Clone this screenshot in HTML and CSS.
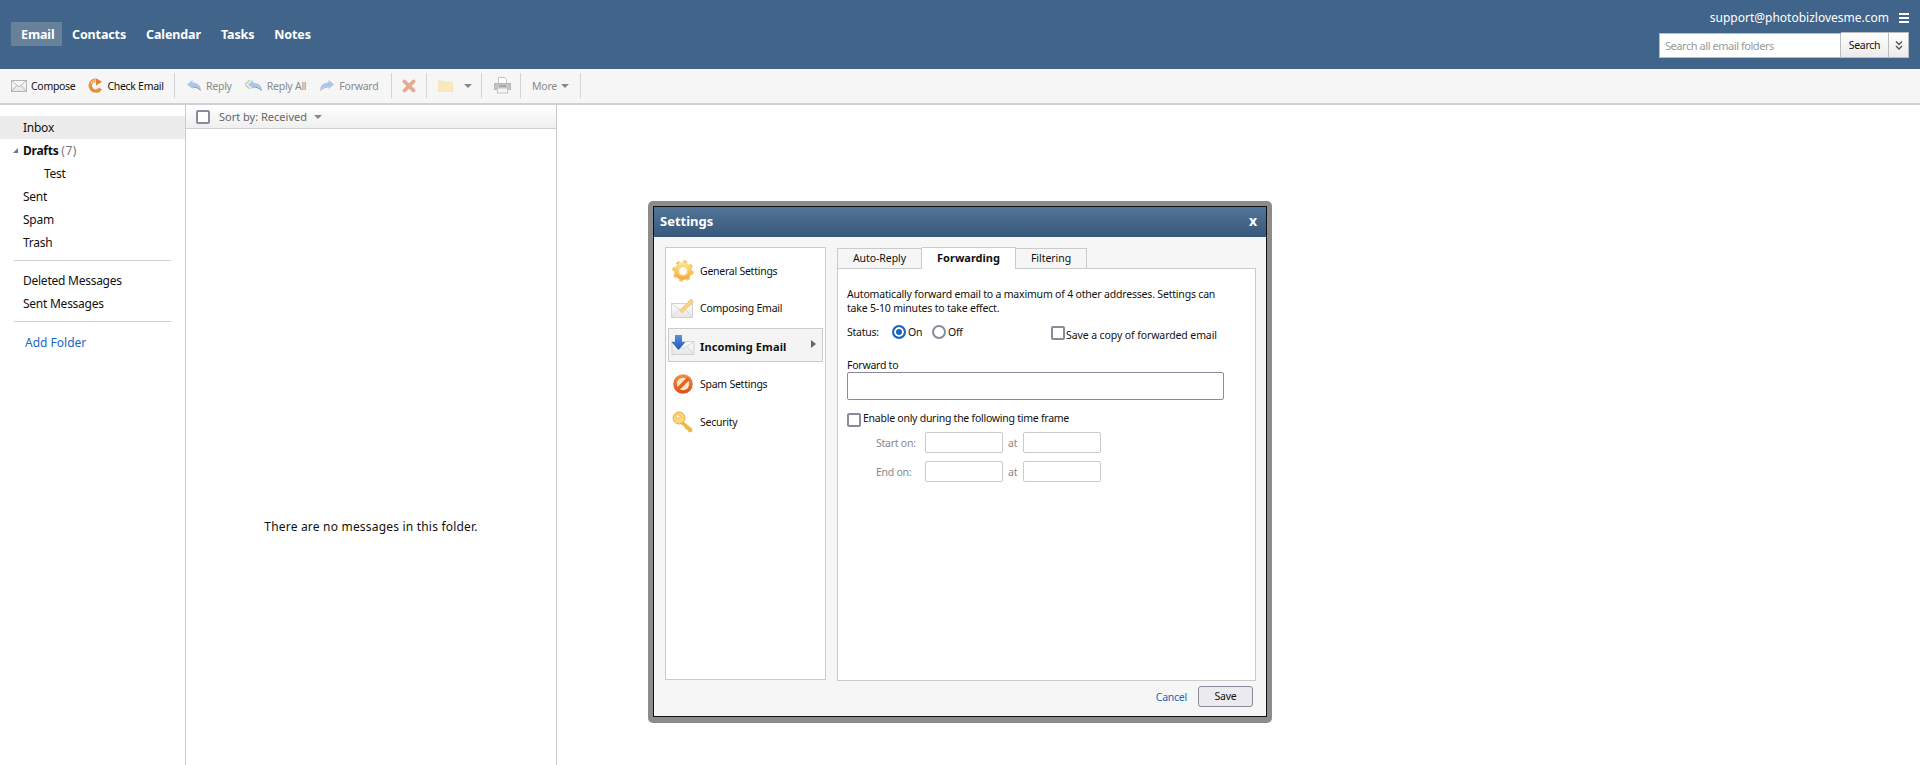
FILE: index.html
```html
<!DOCTYPE html>
<html lang="en">
<head>
<meta charset="utf-8">
<title>Email</title>
<link rel="stylesheet" href="styles.css">
</head>
<body>
<svg class="defs" width="0" height="0" aria-hidden="true">
  <defs>
    <linearGradient id="env" x1="0" y1="0" x2="0" y2="1"><stop offset="0" stop-color="#fdfdfd"/><stop offset="1" stop-color="#e6e6e6"/></linearGradient>
    <linearGradient id="gear" x1="0" y1="0" x2="0" y2="1"><stop offset="0" stop-color="#fde08a"/><stop offset="1" stop-color="#f3ae3e"/></linearGradient>
    <linearGradient id="orange" x1="0" y1="0" x2="0" y2="1"><stop offset="0" stop-color="#f58a3c"/><stop offset="1" stop-color="#d9561a"/></linearGradient>
    <linearGradient id="blue" x1="0" y1="0" x2="0" y2="1"><stop offset="0" stop-color="#5a92e0"/><stop offset="1" stop-color="#1f56b4"/></linearGradient>
  </defs>
</svg>
<header class="topbar">
  <nav class="mainnav">
    <a class="tab tab-on">Email</a>
    <a class="tab">Contacts</a>
    <a class="tab">Calendar</a>
    <a class="tab">Tasks</a>
    <a class="tab">Notes</a>
  </nav>
  <div class="account">
    <div class="userline">
      <span class="user">support@photobizlovesme.com</span>
      <span class="burger"><i></i><i></i><i></i></span>
    </div>
    <div class="search">
      <span class="searchbox">Search all email folders</span>
      <span class="searchbtn">Search</span>
      <span class="searchmore"><svg width="8" height="11" viewBox="0 0 8 11"><path d="M1 1.500l3 3 3-3M1 6l3 3 3-3" fill="none" stroke="#555" stroke-width="1.400"/></svg></span>
    </div>
  </div>
</header>

<div class="toolbar">
  <div class="tgroup g-compose">
    <span class="tool t-compose"><svg width="16" height="12" viewBox="0 0 16 12"><rect x=".5" y=".5" width="15" height="11" fill="url(#env)" stroke="#b5b5b5"/><path d="M.5.5L8 7l7.500-6.500M.5 11.500L6 5.500M15.500 11.500L10 5.500" fill="none" stroke="#b5b5b5"/></svg>Compose</span>
    <span class="tool t-check"><svg width="15" height="15" viewBox="0 0 15 15"><path d="M12.500 10.500A5.500 5.500 0 1 1 7 2.200" fill="none" stroke="#e9903e" stroke-width="3.400"/><path d="M7.500 0L14 3.800 8 7.500z" fill="#e97f2c"/><path d="M3 5.500A5 5 0 0 1 6.500 2.500" fill="none" stroke="#fbdcae" stroke-width="1.200"/></svg>Check Email</span>
  </div>
  <div class="tgroup g-reply dim">
    <span class="tool t-reply"><svg width="16" height="13" viewBox="0 0 16 13"><path d="M6.500 1L1 5.500l5.500 4.500V7.500c3.500 0 6 .5 8.500 4 0-4.500-3-7.500-8.500-8z" fill="#a9c6ec"/><path d="M6.500 8c3.500 0 6 1 8 3.500" fill="none" stroke="#8a8a8a" stroke-width="1"/></svg>Reply</span>
    <span class="tool t-replyall"><svg width="18" height="13" viewBox="0 0 18 13"><path d="M5 1L0 5.500 5 10" fill="none" stroke="#c9cb9a" stroke-width="1.500"/><path d="M8 1L3 5.500 8 10V7.500c3.500 0 6 .5 9 4 0-4.500-3.500-7.500-9-8z" fill="#a9c6ec"/><path d="M8 8c3.500 0 6 1 8.500 3.500" fill="none" stroke="#8a8a8a" stroke-width="1"/></svg>Reply All</span>
    <span class="tool t-forward"><svg width="16" height="13" viewBox="0 0 16 13"><path d="M9.500 1L15 5.500 9.500 10V7.500C6 7.500 3.500 8 1 11.500c0-4.500 3-7.500 8.500-8z" fill="#a9c6ec"/><path d="M9.500 8C6.500 8 4 9 1.500 11.500" fill="none" stroke="#9a9a9a" stroke-width=".8"/></svg>Forward</span>
  </div>
  <div class="tgroup g-del dim"><svg width="14" height="14" viewBox="0 0 14 14"><path d="M2.500 2.500l9 9M11.500 2.500l-9 9" stroke="#e9a88e" stroke-width="3.800" stroke-linecap="round"/></svg></div>
  <div class="tgroup g-move dim"><svg width="15" height="12" viewBox="0 0 15 12"><path d="M0 1h5l1 1h9v10H0z" fill="#fbe8bf" stroke="#f2dcac" stroke-width=".5"/></svg><span class="caret"></span></div>
  <div class="tgroup g-print dim"><svg width="17" height="17" viewBox="0 0 17 17"><path d="M4.500.5h6l2 2v5h-8z" fill="#fff" stroke="#c4c4c4"/><rect x=".5" y="6.500" width="16" height="6" fill="#c4c4c4" stroke="#b8b8b8"/><rect x="3.500" y="11" width="10" height="5" fill="#f5f5f5" stroke="#c4c4c4"/><path d="M5 9h7" stroke="#8d8d8d"/></svg></div>
  <div class="tgroup g-more dim"><span class="tool">More</span><span class="caret"></span></div>
</div>

<main class="panes">
  <aside class="folders">
    <div class="folder folder-on">Inbox</div>
    <div class="folder folder-bold"><span class="twist"></span><b>Drafts</b> <span class="count">(7)</span></div>
    <div class="folder folder-sub">Test</div>
    <div class="folder">Sent</div>
    <div class="folder">Spam</div>
    <div class="folder">Trash</div>
    <hr class="rule">
    <div class="folder">Deleted Messages</div>
    <div class="folder">Sent Messages</div>
    <hr class="rule rule-second">
    <div class="folder folder-add"><a class="link">Add Folder</a></div>
  </aside>
  <section class="list">
    <div class="sortbar"><span class="check check-sort"></span><span class="sortlabel">Sort by: Received</span><span class="caret"></span></div>
    <div class="empty">There are no messages in this folder.</div>
  </section>
  <section class="reading"></section>
</main>

<div class="modal">
  <div class="modal-inner">
    <div class="modal-title"><span>Settings</span><span class="close">x</span></div>
    <div class="modal-body">
      <ul class="menu">
        <li class="item">
          <svg class="ico" width="24" height="24" viewBox="0 0 24 24"><circle cx="12" cy="12" r="9.200" fill="none" stroke="#f6c25e" stroke-width="3" stroke-dasharray="3.600 3.620"/><circle cx="12" cy="12" r="7" fill="none" stroke="url(#gear)" stroke-width="4"/><circle cx="12" cy="12" r="4.500" fill="#fffbe8" stroke="#eeb24a" stroke-width=".7"/></svg>
          <span>General Settings</span>
        </li>
        <li class="item item-short">
          <svg class="ico" width="24" height="20" viewBox="0 0 24 20"><rect x=".5" y="5.500" width="21" height="14" fill="url(#env)" stroke="#d2d2d2"/><path d="M.5 5.500L11 13l10.500-7.500M.5 19.500L8 11M21.500 19.500L14 11" fill="none" stroke="#d8d8d8"/><path d="M8.500 12.500L20 1l2.500 2.500L11 15z" fill="#f8d284" stroke="#ecb85a" stroke-width=".5"/></svg>
          <span>Composing Email</span>
        </li>
        <li class="item item-on">
          <svg class="ico" width="23" height="20" viewBox="0 0 23 20"><rect x=".5" y="6.500" width="22" height="13" fill="url(#env)" stroke="#d2d2d2"/><path d="M.5 6.500L11.500 14l11-7.500M22.500 19.500L15 11" fill="none" stroke="#d8d8d8"/><path d="M3.500 0h7v7h3.500L7 15 0 7h3.500z" fill="url(#blue)"/></svg>
          <b>Incoming Email</b>
          <span class="arrow"></span>
        </li>
        <li class="item">
          <svg class="ico" width="22" height="22" viewBox="0 0 22 22"><circle cx="11" cy="11" r="8" fill="#fbe3cf" stroke="url(#orange)" stroke-width="3.600"/><path d="M5.500 16.500L16.500 5.500" stroke="#e2661f" stroke-width="3.600"/></svg>
          <span>Spam Settings</span>
        </li>
        <li class="item">
          <svg class="ico" width="22" height="22" viewBox="0 0 22 22"><path d="M9 9l11 9-.5 3-3-.5-1-2-2-1-1-2-5-4z" fill="#f0b93f" stroke="#dc9f2f" stroke-width=".5"/><circle cx="7" cy="7" r="6" fill="#f9d77b" stroke="#e5ac3c"/><circle cx="6" cy="5.500" r="2" fill="#fff6d8" stroke="#e5ac3c" stroke-width=".7"/></svg>
          <span>Security</span>
        </li>
      </ul>
      <div class="pane">
        <div class="tabs">
          <span class="ptab ptab-first">Auto-Reply</span>
          <span class="ptab ptab-on">Forwarding</span>
          <span class="ptab ptab-last">Filtering</span>
        </div>
        <div class="tabbody">
          <p class="intro">Automatically forward email to a maximum of 4 other addresses. Settings can take 5-10 minutes to take effect.</p>
          <div class="statusrow">
            <span class="status-label">Status:</span>
            <span class="radio radio-on"></span><span class="opt">On</span>
            <span class="radio radio-off"></span><span class="opt">Off</span>
            <span class="check check-save"></span><span class="savecopy">Save a copy of forwarded email</span>
          </div>
          <div class="fwlabel">Forward to</div>
          <div class="field"></div>
          <div class="enablerow"><span class="check"></span><span class="enabletext">Enable only during the following time frame</span></div>
          <div class="daterow"><span class="datelabel">Start on:</span><span class="datefield"></span><span class="at">at</span><span class="datefield"></span></div>
          <div class="daterow"><span class="datelabel">End on:</span><span class="datefield"></span><span class="at">at</span><span class="datefield"></span></div>
        </div>
      </div>
    </div>
    <div class="modal-foot"><a class="link">Cancel</a><span class="savebtn">Save</span></div>
  </div>
</div>
</body>
</html>
```

FILE: styles.css
```css
* { box-sizing: border-box; }
html, body { margin: 0; height: 100%; }
body {
  width: 1920px;
  height: 765px;
  overflow: hidden;
  background: #fff;
  color: #111;
  font-family: "Noto Sans", sans-serif;
  font-size: 10.5px;
  letter-spacing: -0.25px;
  line-height: 14px;
  position: relative;
  white-space: nowrap;
}
.defs { position: absolute; }
.dim { color: #8b8b8b; }
.link { color: #1a66c4; }

/* top bar */
.topbar {
  height: 69px;
  background: #41648a;
  display: flex;
  justify-content: space-between;
  color: #fff;
}
.mainnav { display: flex; align-items: flex-start; padding: 22px 0 0 11px; }
.tab {
  font-weight: bold;
  font-size: 12.5px;
  letter-spacing: -0.12px;
  line-height: 26px;
  height: 24px;
  padding: 0 10px;
}
.tab-on { background: #668199; width: 51px; }
.account { width: 260px; padding: 11px 11px 0 0; display: flex; flex-direction: column; align-items: flex-end; }
.userline { display: flex; align-items: center; font-size: 12px; letter-spacing: 0; }
.burger { display: flex; flex-direction: column; gap: 2px; width: 10px; margin-left: 10px; }
.burger i { display: block; height: 2px; background: #fff; }
.search { display: flex; margin-top: 7px; height: 26px; align-items: center; color: #111; }
.searchbox {
  width: 182px; height: 25px; background: #fff; border: 1px solid #b9bdc2;
  color: #999; padding-left: 5px; line-height: 23px; font-size: 11px; letter-spacing: -0.45px;
}
.searchbtn, .searchmore {
  height: 26px; background: linear-gradient(#fff, #ebebeb); border: 1px solid #b9bdc2;
  line-height: 24px; text-align: center;
}
.searchbtn { width: 48px; border-left: 0; }
.searchmore { width: 20px; border-left: 0; display: flex; align-items: center; justify-content: center; }

/* toolbar */
.toolbar {
  height: 36px;
  background: #f5f6f5;
  border-bottom: 2px solid #cfd1d2;
  display: flex;
  align-items: center;
  padding-bottom: 1px;
}
.tgroup { display: flex; align-items: center; height: 25px; border-right: 1px solid #d2d4d5; }
.tool { display: flex; align-items: center; }
.tool svg { margin-right: 4px; }
.g-compose { width: 175px; padding-left: 11px; letter-spacing: -0.3px; }
.t-check { margin-left: 13px; }
.g-reply { width: 217px; padding-left: 11px; }
.t-replyall { margin-left: 13px; }
.t-forward { margin-left: 13px; }
.g-del { width: 35px; padding-left: 10px; }
.g-move { width: 55px; padding-left: 11px; }
.g-move .caret { margin-left: 11px; }
.g-print { width: 39px; padding-left: 12px; }
.g-more { width: 60px; padding-left: 11px; }
.g-more .caret { margin-left: 4px; }
.caret { display: inline-block; width: 0; height: 0; border: 4px solid transparent; border-top-color: #888; border-bottom: 0; }

/* panes */
.panes { display: flex; height: 660px; }
.folders { width: 186px; border-right: 1px solid #c9cbcc; padding-top: 11px; }
.folder { height: 23px; line-height: 24px; padding-left: 23px; font-size: 12px; letter-spacing: -0.25px; position: relative; }
.folder-on { background: #ececec; }
.folder-sub { padding-left: 44px; }
.twist { position: absolute; left: 13px; top: 9px; width: 0; height: 0; border-bottom: 5px solid #777; border-left: 5px solid transparent; }
.count { color: #777; letter-spacing: 0.5px; }
.folder-add { padding-left: 25px; margin-top: 9px; letter-spacing: 0; }
.rule { border: 0; border-top: 1px solid #cfcfcf; margin: 6px 14px 8px; }
.rule-second { margin-bottom: 0; margin-top: 6px; }
.list { width: 371px; border-right: 1px solid #c9cbcc; display: flex; flex-direction: column; }
.sortbar {
  height: 24px; background: linear-gradient(#fff, #efefef); border-bottom: 1px solid #cfd1d2;
  display: flex; align-items: center; padding-left: 10px; color: #666;
}
.sortlabel { margin: 0 7px 0 9px; font-size: 11px; letter-spacing: 0; }
.empty { font-size: 12px; letter-spacing: 0.2px; text-align: center; padding-top: 391px; }
.reading { flex: 1; }

/* checks */
.check { display: inline-block; width: 14px; height: 14px; border: 2px solid #8a8a9a; border-radius: 2px; background: #fff; flex: none; }

/* modal */
.modal {
  position: absolute; left: 648px; top: 201px; width: 624px; height: 522px;
  background: #8c8c8c; border-radius: 5px; padding: 5px 5px 6px;
}
.modal-inner { height: 100%; border: 1px solid #111; background: #f5f6f5; display: flex; flex-direction: column; }
.modal-title {
  height: 30px; background: linear-gradient(#527597, #37587b); color: #fff; font-weight: bold;
  font-size: 13px; letter-spacing: 0; line-height: 28px; padding: 0 9px 0 6px; display: flex; justify-content: space-between;
}
.close { font-size: 14px; }
.modal-body { flex: 1; display: flex; padding: 10px 0 0 11px; }
.menu {
  list-style: none; margin: 0; padding: 4px 2px 0; width: 161px; height: 433px; background: #fff; border: 1px solid #c9cbcc;
}
.item { height: 38px; display: flex; align-items: center; padding-left: 3px; position: relative; }
.item span { margin-left: 5px; }
.item-short { height: 37px; padding-bottom: 1px; }
.ico { width: 24px; flex: none; }
.item-on { height: 34px; margin: 1px 0 3px; background: #f3f4f3; border: 1px solid #c9cbcc; padding-left: 2px; }
.item-on b { margin: 3px 0 0 5px; font-size: 11px; letter-spacing: 0.1px; }
.item span.arrow { position: absolute; left: 142px; top: 11px; margin: 0; width: 0; height: 0; border: 4px solid transparent; border-left: 5px solid #666; border-right: 0; }
.pane { width: 419px; margin-left: 11px; }
.tabs { display: flex; height: 22px; align-items: flex-end; position: relative; z-index: 1; margin-bottom: -1px; }
.ptab { height: 21px; line-height: 19px; text-align: center; background: #f5f6f5; border: 1px solid #c9cbcc; letter-spacing: -0.05px; }
.ptab-first { width: 85px; }
.ptab-on { width: 94px; height: 22px; background: #fff; border-bottom: 0; border-left: 0; font-weight: bold; font-size: 11px; letter-spacing: 0; line-height: 20px; }
.ptab-last { width: 71px; border-left: 0; }
.tabbody { height: 413px; background: #fff; border: 1px solid #c9cbcc; padding: 18px 9px 0; }
.intro { margin: 0; width: 380px; line-height: 14px; white-space: normal; letter-spacing: -0.19px; }
.statusrow { display: flex; align-items: flex-start; height: 32px; margin-top: 10px; }
.statusrow > * { flex: none; }
.status-label { width: 45px; }
.radio { width: 14px; height: 14px; border-radius: 50%; border: 2px solid #8a8a9a; background: #fff; }
.radio-on { border-color: #1a66c4; box-shadow: inset 0 0 0 2px #fff; background: #1a66c4; }
.opt { margin-left: 2px; width: 24px; }
.savecopy { margin-left: 1px; margin-top: 3px; letter-spacing: -0.1px; }
.check-save { margin-top: 1px; margin-left: 79px; }
.fwlabel { margin-top: 1px; line-height: 14px; }
.field { width: 377px; height: 28px; background: #fff; border: 1px solid #8a8a9a; border-radius: 2px; }
.enablerow { display: flex; margin-top: 12px; height: 20px; }
.enablerow .check { margin-top: 1px; }
.enabletext { margin-left: 2px; margin-top: -1px; }
.daterow { display: flex; align-items: center; height: 21px; margin-bottom: 8px; color: #888; padding-left: 29px; }
.datelabel { width: 49px; }
.datefield { width: 78px; height: 21px; border: 1px solid #c9cbcc; border-radius: 2px; background: #fff; }
.at { width: 20px; padding-left: 5px; }
.modal-foot { height: 30px; display: flex; justify-content: flex-end; align-items: center; padding: 0 13px 9px 0; }
.savebtn {
  width: 55px; height: 21px; margin-left: 11px; background: #ebebef; border: 1px solid #8a8a9a; border-radius: 3px;
  text-align: center; line-height: 19px;
}
```
